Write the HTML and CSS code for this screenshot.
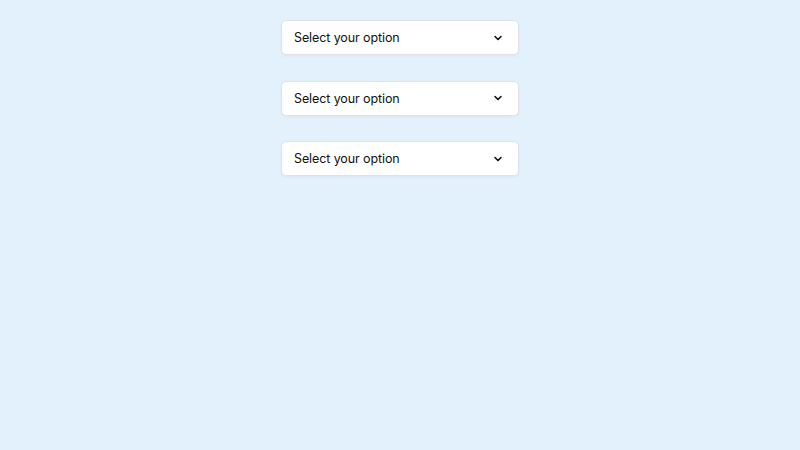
FILE: index.html
```html
<!DOCTYPE html>
<html lang="en">
<head>
    <meta charset="UTF-8">
    <meta name="viewport" content="width=device-width, initial-scale=1.0">
    <title>Custom Select</title>
    <link rel="stylesheet" href="styles.css">
</head>
<body>
    <div class="wrapper">
        <div class="select-box">
            <span class="select-text">Select your option</span>
            <svg class="chevron" width="10" height="10" viewBox="0 0 10 10"><path d="M2 3.5 L5 6.5 L8 3.5" fill="none" stroke="#111" stroke-width="1.6" stroke-linecap="round" stroke-linejoin="round"/></svg>
        </div>
        <div class="select-box">
            <span class="select-text">Select your option</span>
            <svg class="chevron" width="10" height="10" viewBox="0 0 10 10"><path d="M2 3.5 L5 6.5 L8 3.5" fill="none" stroke="#111" stroke-width="1.6" stroke-linecap="round" stroke-linejoin="round"/></svg>
        </div>
        <div class="select-box">
            <span class="select-text">Select your option</span>
            <svg class="chevron" width="10" height="10" viewBox="0 0 10 10"><path d="M2 3.5 L5 6.5 L8 3.5" fill="none" stroke="#111" stroke-width="1.6" stroke-linecap="round" stroke-linejoin="round"/></svg>
        </div>
    </div>
</body>
</html>
```
FILE: styles.css
```css
* {
    margin: 0;
    padding: 0;
    box-sizing: border-box;
}

body {
    font-family: Inter, 'Noto Sans', sans-serif;
    background: #e3f1fc;
    min-height: 100vh;
}

.wrapper {
    width: 238px;
    margin: 0 auto;
    padding-top: 20px;
    display: flex;
    flex-direction: column;
    gap: 25.5px;
}

.select-box {
    height: 35px;
    background: white;
    border: 1px solid #dde3e8;
    border-radius: 5px;
    box-shadow: 0 1px 3px rgba(0,0,0,0.05);
    display: flex;
    align-items: center;
    justify-content: space-between;
    padding: 0 15px 0 12px;
}

.select-text {
    font-size: 12.5px;
    color: #111;
    letter-spacing: -0.1px;
}

.chevron {
    display: block;
}
```
